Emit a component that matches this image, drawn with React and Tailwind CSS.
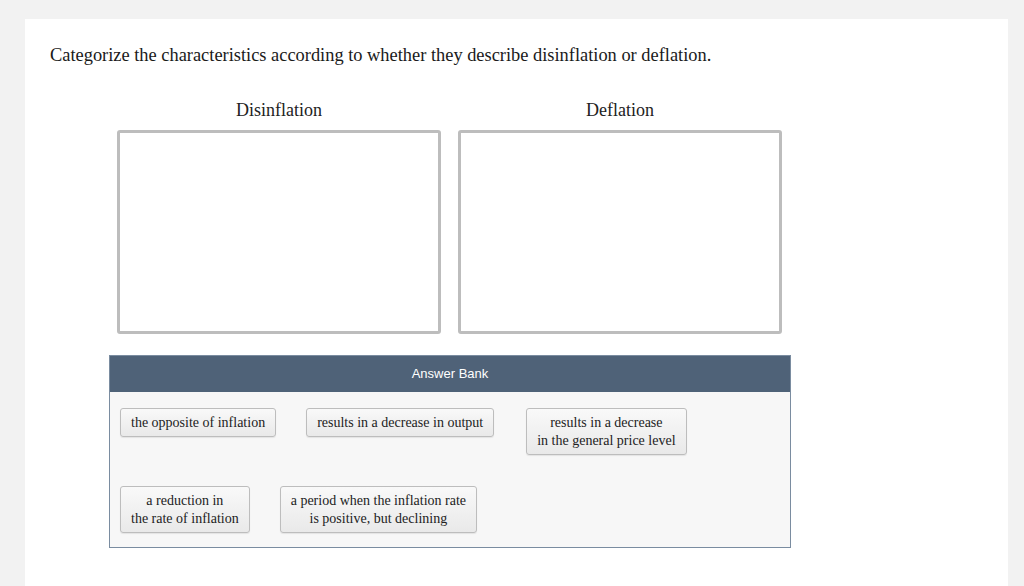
import React from "react";

const serif = { fontFamily: '"Liberation Serif", "Times New Roman", serif' };

function Chip({ lines }) {
  return (
    <div className="rounded-[3px] border border-[#bdbdbd] bg-gradient-to-b from-[#f9f9f9] to-[#e9e9e9] px-[10px] py-[4.5px] text-center text-[14px] leading-[18px] text-[#222] shadow-[0_1px_1px_rgba(0,0,0,0.08)]">
      {lines.map((l, i) => (
        <div key={i} className="whitespace-nowrap">{l}</div>
      ))}
    </div>
  );
}

export default function App() {
  return (
    <div className="min-h-[586px] bg-[#f2f2f2] pl-[25px] pr-[16px] pt-[19px]" style={serif}>
      <div className="min-h-[567px] bg-white pl-[25px] pt-[23px]">
        <div className="text-[18.4px] leading-[26px] text-[#1a1a1a]">
          Categorize the characteristics according to whether they describe disinflation or deflation.
        </div>
        <div className="mt-[31px] flex gap-[17px] pl-[67px]">
          <div className="flex flex-col items-center">
            <div className="text-[18px] leading-[22px] text-[#222]">Disinflation</div>
            <div className="mt-[9px] h-[204px] w-[324px] rounded-[3px] border-[3px] border-[#bdbdbd]" />
          </div>
          <div className="flex flex-col items-center">
            <div className="text-[18px] leading-[22px] text-[#222]">Deflation</div>
            <div className="mt-[9px] h-[204px] w-[324px] rounded-[3px] border-[3px] border-[#bdbdbd]" />
          </div>
        </div>
        <div className="ml-[59px] mt-[21px] w-[682px] border border-[#7a8ca0]">
          <div
            className="flex h-[36px] items-center justify-center bg-[#4f6278] text-[13px] text-white"
            style={{ fontFamily: '"Liberation Sans", Arial, sans-serif' }}
          >
            Answer Bank
          </div>
          <div className="flex flex-col gap-[31px] bg-[#f7f7f7] px-[10px] pb-[14px] pt-[16px]">
            <div className="flex items-start gap-x-[30px]">
              <Chip lines={["the opposite of inflation"]} />
              <Chip lines={["results in a decrease in output"]} />
              <div className="ml-[2px]">
                <Chip lines={["results in a decrease", "in the general price level"]} />
              </div>
            </div>
            <div className="flex items-start gap-x-[30px]">
              <Chip lines={["a reduction in", "the rate of inflation"]} />
              <Chip lines={["a period when the inflation rate", "is positive, but declining"]} />
            </div>
          </div>
        </div>
      </div>
    </div>
  );
}
